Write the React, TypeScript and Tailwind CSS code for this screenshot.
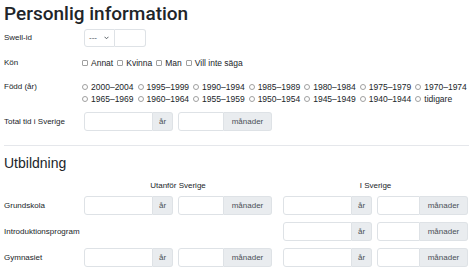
import React from "react";

const font = { fontFamily: '"Liberation Sans", Arial, sans-serif' };

function Group({ w, addon, addonW }: { w: string; addon: string; addonW: string }) {
  return (
    <div className={`flex h-[19px] ${w}`}>
      <div className="flex-1 rounded-l-[3px] border border-[#dee2e6] bg-white" />
      <div
        className={`flex ${addonW} items-center justify-center rounded-r-[3px] border border-l-0 border-[#dee2e6] bg-[#e9ecef] text-[8px] text-[#495057]`}
      >
        {addon}
      </div>
    </div>
  );
}

function Pair({ second }: { second: string }) {
  return (
    <div className="flex gap-[5px]">
      <Group w="w-[89px]" addon="år" addonW="w-[20px]" />
      <Group w={second} addon="månader" addonW="w-[48px]" />
    </div>
  );
}

function Radio({ label }: { label: string }) {
  return (
    <div className="flex shrink-0 items-center gap-[3px] whitespace-nowrap">
      <span className="inline-block h-[6px] w-[6px] shrink-0 rounded-full border border-[#a0a0a0] bg-white" />
      <span>{label}</span>
    </div>
  );
}

function Check({ label }: { label: string }) {
  return (
    <div className="flex shrink-0 items-center gap-[3px] whitespace-nowrap">
      <span className="inline-block h-[6px] w-[6px] shrink-0 rounded-[1px] border border-[#a0a0a0] bg-white" />
      <span>{label}</span>
    </div>
  );
}

export default function App() {
  const row1 = ["2000–2004", "1995–1999", "1990–1994", "1985–1989", "1980–1984", "1975–1979", "1970–1974"];
  const row2 = ["1965–1969", "1960–1964", "1955–1959", "1950–1954", "1945–1949", "1940–1944", "tidigare"];
  return (
    <div className="h-[273px] w-[474px] overflow-hidden bg-white pl-[4px] pr-[5px] text-[#212529]" style={font}>
      <h1
        className="pt-[2px] text-[19px] font-medium leading-[24px]"
        style={{ fontFamily: 'Roboto, "Liberation Sans", Arial, sans-serif' }}
      >
        Personlig information
      </h1>

      <div className="mt-[3px] grid grid-cols-[80px_1fr] items-center">
        <div className="text-[8px]">Swell-id</div>
        <div className="flex h-[18px]">
          <div className="flex w-[31px] items-center justify-between rounded-l-[3px] border border-[#dee2e6] pl-[4px] pr-[5px] text-[8px] text-[#495057]">
            <span>---</span>
            <svg width="5" height="4" viewBox="0 0 10 7" fill="none" stroke="#495057" strokeWidth="1.8">
              <path d="M1 1l4 4 4-4" />
            </svg>
          </div>
          <div className="w-[31px] rounded-r-[3px] border border-l-0 border-[#dee2e6]" />
        </div>
      </div>

      <div className="mt-[10px] grid h-[12px] grid-cols-[80px_1fr] items-center">
        <div className="text-[8px]">Kön</div>
        <div className="-ml-[2px] flex items-center gap-[4px] text-[8.5px]">
          <Check label="Annat" />
          <Check label="Kvinna" />
          <Check label="Man" />
          <Check label="Vill inte säga" />
        </div>
      </div>

      <div className="mt-[12px] grid grid-cols-[80px_1fr]">
        <div className="flex h-[12px] items-center text-[8px]">Född (år)</div>
        <div className="-ml-[2px] flex flex-col text-[8.5px]">
          <div className="flex h-[12px] items-center gap-[4px]">
            {row1.map((l) => (
              <Radio key={l} label={l} />
            ))}
          </div>
          <div className="flex h-[12px] items-center gap-[4px]">
            {row2.map((l) => (
              <Radio key={l} label={l} />
            ))}
          </div>
        </div>
      </div>

      <div className="mt-[7px] grid grid-cols-[80px_1fr] items-center">
        <div className="text-[8px]">Total tid i Sverige</div>
        <Pair second="w-[94px]" />
      </div>

      <div className="mt-[14px] h-px bg-[#e5e7eb]" />

      <h2 className="mt-[9px] text-[14px] leading-[16px]">Utbildning</h2>

      <div className="mt-[9px] grid h-[10px] grid-cols-[80px_188px_196px] items-center text-[8px]">
        <div />
        <div className="text-center">Utanför Sverige</div>
        <div className="ml-[11px] w-[185px] text-center">I Sverige</div>
      </div>

      <div className="mt-[6px] flex flex-col gap-[7px]">
        <div className="grid grid-cols-[80px_188px_196px] items-center">
          <div className="text-[8px]">Grundskola</div>
          <Pair second="w-[94px]" />
          <div className="ml-[11px]">
            <Pair second="w-[91px]" />
          </div>
        </div>
        <div className="grid grid-cols-[80px_188px_196px] items-center">
          <div className="text-[8px]">Introduktionsprogram</div>
          <div />
          <div className="ml-[11px]">
            <Pair second="w-[91px]" />
          </div>
        </div>
        <div className="grid grid-cols-[80px_188px_196px] items-center">
          <div className="text-[8px]">Gymnasiet</div>
          <Pair second="w-[94px]" />
          <div className="ml-[11px]">
            <Pair second="w-[91px]" />
          </div>
        </div>
      </div>
    </div>
  );
}
